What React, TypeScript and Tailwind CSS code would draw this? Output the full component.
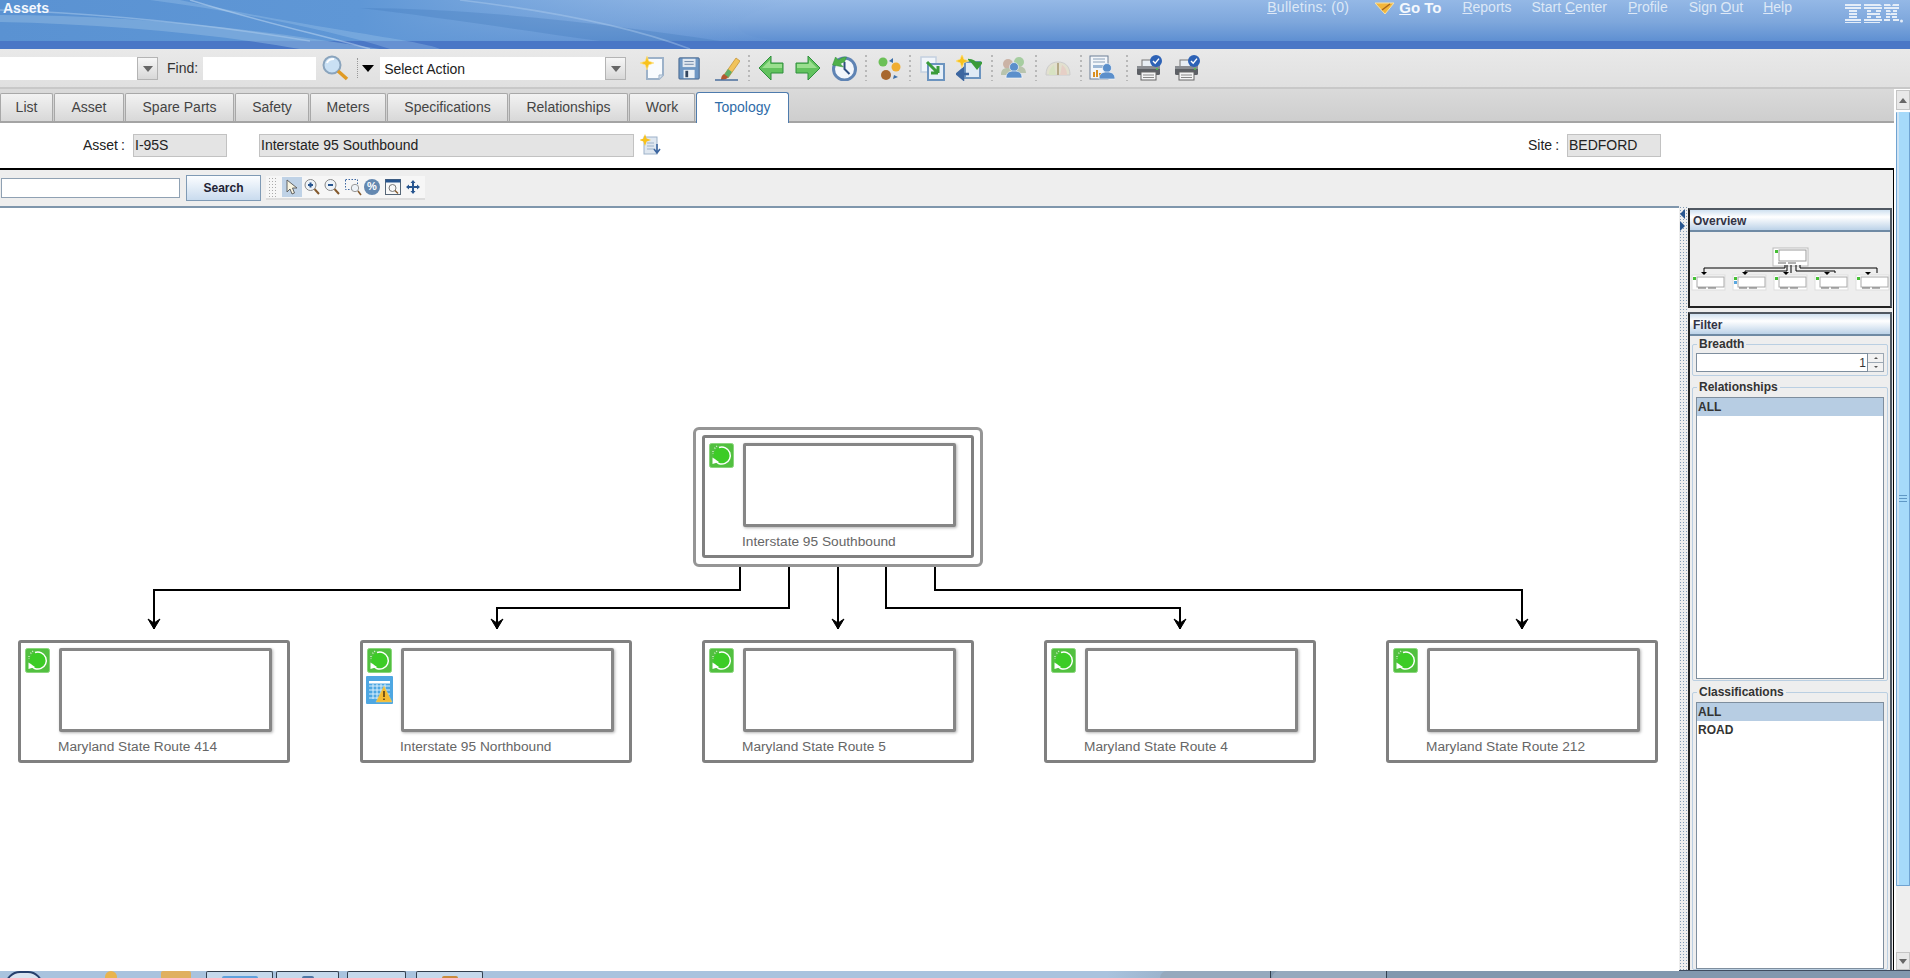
import React from "react";

const F = "font-['Liberation_Sans',Arial,sans-serif]";

function Banner() {
  return (
    <div className="relative h-[49px] shrink-0 overflow-hidden bg-[linear-gradient(#94b8e6_0%,#7ea7dc_45%,#5f90d2_83%,#4a77c6_84%,#4a77c6_100%)]">
      <svg className="absolute left-0 top-0" width="1910" height="49" viewBox="0 0 1910 49">
        <defs>
          <linearGradient id="bg1" x1="0" y1="0" x2="1" y2="0">
            <stop offset="0" stopColor="#5a92d2" />
            <stop offset="0.45" stopColor="#5f97d6" />
            <stop offset="1" stopColor="#7ea9dd" stopOpacity="0" />
          </linearGradient>
        </defs>
        <path d="M0 0H800C700 20 740 41 790 41H0Z" fill="url(#bg1)" />
        <path d="M0 15C120 15 240 26 380 49H300C210 33 100 24 0 22Z" fill="#8cb6e0" opacity="0.55" />
        <path d="M180 0C320 30 420 40 440 49H390C330 30 240 12 150 0Z" fill="#a8cdee" opacity="0.3" />
        <path d="M360 8C470 8 610 24 720 41H600C520 30 430 16 360 8Z" fill="#3f78bb" opacity="0.3" />
        <path d="M190 0C260 22 330 37 370 49" stroke="#cfe3f6" strokeWidth="1.5" fill="none" opacity="0.45" />
        <path d="M0 10C120 14 230 28 310 41" stroke="#b6d3ef" strokeWidth="1.5" fill="none" opacity="0.45" />
        <path d="M460 0C560 12 640 30 690 49" stroke="#b6d3ef" strokeWidth="1.5" fill="none" opacity="0.4" />
      </svg>
      <div className="relative flex h-[41px] items-start">
        <span className={`pl-[3px] text-[14px] font-bold leading-[16px] text-[#f4f8fd] ${F}`}>Assets</span>
        <div className={`ml-auto flex items-start text-[14px] leading-[15px] text-[#dde8f6] ${F}`}>
          <span className="tracking-[0.3px]"><u>B</u>ulletins: (0)</span>
          <svg className="ml-[26px] mt-[2px]" width="20" height="13" viewBox="0 0 20 13">
            <path d="M0 1H19L10 12Z" fill="#f2b63c" stroke="#f8e2a8" strokeWidth="1" />
            <path d="M7 8L15 2" stroke="#a8641c" strokeWidth="1.4" />
          </svg>
          <span className="ml-[4px] text-[15px] font-bold text-[#f4f8fd]"><u>G</u>o To</span>
          <span className="ml-[21px]"><u>R</u>eports</span>
          <span className="ml-[20px]">Start <u>C</u>enter</span>
          <span className="ml-[21px]"><u>P</u>rofile</span>
          <span className="ml-[21px]">Sign <u>O</u>ut</span>
          <span className="ml-[20px]"><u>H</u>elp</span>
          <svg className="ml-[53px] mr-[7px] mt-[4px]" width="58" height="19" viewBox="0 0 58 19">
            <g fill="#e4edf8">
              <path d="M0 0h16v2H0zM0 3h16v2H0zM4 6h8v2H4zM4 9h8v2H4zM4 12h8v2H4zM0 15h16v2H0zM0 18h16v1H0z" />
              <path d="M19 0h16l2 2H19zM19 3h18v2H19zM22 6h4v2h-4zM31 6h5v2h-5zM22 9h13v2H22zM22 12h4v2h-4zM31 12h5v2h-5zM19 15h18v2H19zM19 18h16v1H19z" />
              <path d="M39 0h6l1 2h-7zM48 0h6v2h-7zM39 3h8l1 2h-9zM46 3h8v2h-8zM41 6h4l1 2h-5zM48 6h4v2h-4zM41 9h4l2 2h-6zM46 9h6v2h-6zM41 12h4v2h-4zM47 12h1v2h-1zM48 12h4v2h-4zM39 15h6v2h-6zM48 15h6v2h-6z" />
              <circle cx="56.5" cy="17" r="1.5" />
            </g>
          </svg>
        </div>
      </div>
    </div>
  );
}

function Sep() {
  return <div className="mx-[1px] h-[26px] w-[2px] shrink-0 bg-[repeating-linear-gradient(#b8b8b8_0,#b8b8b8_2px,transparent_2px,transparent_5px)]" />;
}

function Dropdown({ w, children }: { w: string; children?: React.ReactNode }) {
  return (
    <div className={`mt-[1px] flex h-[23px] items-center justify-between bg-white ${w}`}>
      <span className={`pl-[4px] pt-[1px] text-[14px] text-[#222] ${F}`}>{children}</span>
      <div className="flex h-[23px] w-[21px] items-center justify-center border border-[#b4b4b4] bg-[linear-gradient(#f6f6f6,#d8d8d8)]">
        <div className="h-0 w-0 border-x-[5px] border-t-[6px] border-x-transparent border-t-[#666]" />
      </div>
    </div>
  );
}

function Ic({ w = 26, children }: { w?: number; children: React.ReactNode }) {
  return (
    <svg width={w} height="26" viewBox="0 0 26 26" className="shrink-0">
      {children}
    </svg>
  );
}

const Star = ({ x, y }: { x: number; y: number }) => (
  <path transform={`translate(${x} ${y})`} d="M0-7 1.8-1.8 7 0 1.8 1.8 0 7-1.8 1.8-7 0-1.8-1.8Z" fill="#f8c21c" stroke="#fde38a" strokeWidth="0.7" />
);

const Person = ({ x, y, c = "#5b8fcb" }: { x: number; y: number; c?: string }) => (
  <g transform={`translate(${x} ${y})`}>
    <circle cx="0" cy="-4" r="4.5" fill={c} stroke="#fff" strokeWidth="0.6" />
    <path d="M-8 7C-8 1-4 0 0 0S8 1 8 7Z" fill={c} stroke="#fff" strokeWidth="0.6" />
  </g>
);

function Printer() {
  return (
    <Ic>
      <rect x="6" y="5" width="13" height="8" fill="#e8eef4" stroke="#777" />
      <rect x="1" y="11" width="23" height="9" rx="1.5" fill="#5d6065" />
      <rect x="1" y="11" width="23" height="3" fill="#8a8d92" />
      <rect x="5" y="17" width="15" height="8" fill="#f4f4f4" stroke="#666" />
      <path d="M7 20h11M7 22.5h11" stroke="#888" />
      <circle cx="21" cy="14" r="1" fill="#4fc34a" />
      <circle cx="20" cy="6" r="6" fill="#2d62b6" />
      <path d="M17 6l2.2 2.3L23 3.6" stroke="#fff" strokeWidth="1.4" fill="none" />
    </Ic>
  );
}

function ToolbarIcons() {
  return (
    <div className="ml-[14px] flex items-center">
      <div className="flex w-[38px] shrink-0">
        <Ic>
          <path d="M7 3H23V20L19 24H7Z" fill="#f8fbfe" stroke="#9db2c9" strokeWidth="2" />
          <path d="M19 24V20H23" fill="#d7e1ec" stroke="#9db2c9" />
          <Star x={7} y={8} />
        </Ic>
      </div>
      <div className="flex w-[36px] shrink-0">
        <Ic w={24}>
          <rect x="1" y="2" width="22" height="23" rx="1" fill="#6f97c4" stroke="#44648c" />
          <rect x="5" y="3" width="14" height="9" fill="#e2e8f0" />
          <path d="M7 6h10M7 9h10" stroke="#6f86a5" />
          <rect x="6" y="15" width="12" height="9" fill="#ecf1f6" />
          <rect x="8" y="16" width="3" height="7" fill="#33465f" />
        </Ic>
      </div>
      <div className="flex w-[33px] shrink-0">
        <Ic>
          <path d="M10 20 22 3 26 6 14 23Z" fill="#f1c35c" stroke="#c08d2b" strokeWidth="0.7" />
          <path d="M10 20 14 14 18 17 14 23Z" fill="#5fae68" />
          <path d="M7 25C7 22 8 20 10 19L14 22C13 24 11 25 7 25Z" fill="#b4562f" />
          <path d="M1 25H24" stroke="#4a6e9c" strokeWidth="1.5" />
        </Ic>
      </div>
      <Sep />
      <div className="ml-[7px] flex w-[37px] shrink-0">
        <Ic>
          <path d="M1 13 13 1V8H25V18H13V25Z" fill="#62c25e" stroke="#2f8f3c" />
          <path d="M4 13 12 5V9H24V13Z" fill="#9adf8f" />
        </Ic>
      </div>
      <div className="flex w-[35px] shrink-0">
        <Ic>
          <path d="M25 13 13 1V8H1V18H13V25Z" fill="#62c25e" stroke="#2f8f3c" />
          <path d="M22 13 14 5V9H2V13Z" fill="#9adf8f" />
        </Ic>
      </div>
      <div className="flex w-[34px] shrink-0">
        <Ic w={27}>
          <circle cx="14" cy="14" r="11" fill="#f2f6fb" stroke="#5f84b4" strokeWidth="3" />
          <path d="M14 7V14L19 19" stroke="#2e4f80" strokeWidth="2" fill="none" />
          <path d="M2 10 5 2 8 5C10 3 13 2 16 2L14 7C12 7 11 8 10 9L13 12Z" fill="#4fb04a" stroke="#2f8f3c" strokeWidth="0.5" />
        </Ic>
      </div>
      <Sep />
      <div className="ml-[8px] flex w-[32px] shrink-0">
        <Ic>
          <circle cx="7" cy="7" r="4.5" fill="#6cc057" />
          <circle cx="20" cy="12" r="4.5" fill="#f0ad32" />
          <circle cx="10" cy="20" r="5" fill="#a8682f" />
          <path d="M13 6 17 3V8ZM18 20 22 22 17 24Z" fill="#3d6fa8" />
        </Ic>
      </div>
      <Sep />
      <div className="ml-[8px] flex w-[36px] shrink-0">
        <Ic>
          <rect x="1" y="2" width="15" height="15" fill="#f1f5fa" stroke="#c3d0df" strokeWidth="1.5" />
          <rect x="8" y="9" width="16" height="16" fill="#e6eff8" stroke="#6c94bf" strokeWidth="2" />
          <path d="M7 7 18 18M18 18V11M18 18H11" stroke="#3a9c3b" strokeWidth="3" fill="none" />
        </Ic>
      </div>
      <div className="flex w-[34px] shrink-0">
        <Ic>
          <rect x="9" y="7" width="15" height="16" fill="#dfeaf5" stroke="#6c94bf" strokeWidth="2" />
          <path d="M12 5C18 5 20 8 21 11M21 13 17 8H25Z" stroke="#3a9c3b" strokeWidth="2.5" fill="#3a9c3b" />
          <path d="M13 19H4M1 19 7 14V24Z" stroke="#3c66a0" strokeWidth="2.5" fill="#3c66a0" />
          <Star x={6} y={6} />
        </Ic>
      </div>
      <Sep />
      <div className="ml-[7px] flex w-[33px] shrink-0">
        <Ic>
          <circle cx="18" cy="7" r="5" fill="#a6cda0" />
          <circle cx="7" cy="9" r="5" fill="#cbb3a6" />
          <path d="M0 20C0 14 3 13 7 13S14 14 14 20ZM12 18C12 12 15 11 18 11S25 13 25 18Z" fill="#b9c4ad" />
          <Person x={13} y={16} />
        </Ic>
      </div>
      <Sep />
      <div className="ml-[7px] flex w-[34px] shrink-0">
        <Ic>
          <path d="M1 20C1 11 6 7 13 7S25 11 25 20Z" fill="#e2e0cf" stroke="#ccc" />
          <path d="M13 8V20" stroke="#b5a987" strokeWidth="2" />
          <path d="M4 20C4 15 6 12 9 10L11 20Z" fill="#d7e2c2" />
          <path d="M22 20C22 15 20 12 17 10L15 20Z" fill="#e6cfc6" />
        </Ic>
      </div>
      <Sep />
      <div className="ml-[6px] flex w-[36px] shrink-0">
        <Ic>
          <rect x="1" y="1" width="18" height="23" fill="#f3f6fa" stroke="#6c7f96" />
          <path d="M4 4h12M4 7h12" stroke="#8aa0b8" />
          <rect x="4" y="10" width="12" height="3" fill="#9db8d6" />
          <path d="M5 22v-5M8 22v-7M11 22v-4" stroke="#d98f20" strokeWidth="2" />
          <Person x={18} y={17} />
        </Ic>
      </div>
      <Sep />
      <div className="ml-[7px] flex w-[38px] shrink-0"><Printer /></div>
      <Printer />
    </div>
  );
}

function Tabs() {
  const tabs: [string, string][] = [
    ["List", "w-[53px]"],
    ["Asset", "w-[70px]"],
    ["Spare Parts", "w-[109px]"],
    ["Safety", "w-[74px]"],
    ["Meters", "w-[76px]"],
    ["Specifications", "w-[121px]"],
    ["Relationships", "w-[119px]"],
    ["Work", "w-[66px]"],
  ];
  return (
    <div className={`flex h-[34px] shrink-0 items-end border-b-2 border-[#a4a4a4] bg-[linear-gradient(#dadada,#cecece)] ${F}`}>
      {tabs.map(([t, w]) => (
        <div
          key={t}
          className={`mr-[1px] flex h-[28px] items-center justify-center rounded-t-[2px] border-x border-t border-[#a8a8a8] bg-[linear-gradient(#f2f2f2,#d8d8d8)] text-[14px] text-[#444] ${w}`}
        >
          {t}
        </div>
      ))}
      <div className="-mb-[2px] flex h-[31px] w-[93px] items-center justify-center rounded-t-[3px] border-x border-t border-[#4e7bad] bg-white pb-[1px] text-[14px] text-[#2f6ca8]">
        Topology
      </div>
    </div>
  );
}

function Field({ w, children }: { w: string; children: React.ReactNode }) {
  return (
    <div className={`flex h-[23px] items-center border border-[#c2c2c2] bg-[#e4e4e4] pl-[1px] text-[14px] text-[#222] ${w}`}>
      {children}
    </div>
  );
}

function FormRow() {
  return (
    <div className={`flex h-[45px] shrink-0 items-center bg-white pb-[1px] ${F}`}>
      <span className="ml-[83px] w-[50px] text-[14px] text-[#222]">Asset<span className="ml-[3px]">:</span></span>
      <Field w="w-[94px]">I-95S</Field>
      <div className="ml-[32px]"><Field w="w-[375px]">Interstate 95 Southbound</Field></div>
      <svg className="ml-[6px]" width="21" height="22" viewBox="0 0 21 22">
        <rect x="4" y="3" width="13" height="17" fill="#dfe7f0" stroke="#9db2c9" />
        <path d="M7 9h7M7 12h7M7 15h7" stroke="#9db2c9" />
        <path d="M17 10v8M14 15l3 4 3-4" stroke="#3c66a0" strokeWidth="1.6" fill="none" />
        <path transform="translate(5 6)" d="M0-6 1.6-1.6 6 0 1.6 1.6 0 6-1.6 1.6-6 0-1.6-1.6Z" fill="#f8c21c" />
      </svg>
      <span className="ml-[867px] w-[39px] text-[14px] text-[#222]">Site<span className="ml-[3px]">:</span></span>
      <Field w="w-[94px]">BEDFORD</Field>
    </div>
  );
}

function SearchBar() {
  return (
    <div className={`flex h-[36px] shrink-0 items-center border-r border-black bg-[#eeeeee] pl-[1px] pb-[1px] ${F}`}>
      <div className="h-[20px] w-[179px] border border-[#8fa1b3] bg-white" />
      <div className="ml-[6px] flex h-[26px] w-[75px] items-center justify-center border border-[#7f9ab5] bg-[linear-gradient(#fbfdff,#c9dbee)] text-[12px] font-bold text-[#223]">
        Search
      </div>
      <div className="ml-[5px] flex h-[24px] items-center border-b-2 border-[#dcdcdc] bg-[#f6f6f6]">
        <div className="ml-[2px] h-[20px] w-[10px] bg-[radial-gradient(#aaa_1px,transparent_1px)] bg-[length:3px_3px]" />
        <div className="ml-[4px] flex h-[20px] w-[20px] items-center justify-center bg-[#bfd2e6]">
          <svg width="14" height="16" viewBox="0 0 14 16"><path d="M2 1V13L5 10 7 15 9.5 14 7.5 9H12Z" fill="#f8f4e0" stroke="#555" strokeWidth="0.9" /></svg>
        </div>
        <svg className="ml-[2px]" width="16" height="18" viewBox="0 0 16 18">
          <circle cx="6.5" cy="7" r="5.5" fill="#eef3f8" stroke="#888" />
          <path d="M4 7h5M6.5 4.5v5" stroke="#27558f" strokeWidth="2" />
          <path d="M10.5 11 15 16" stroke="#84592c" strokeWidth="2" />
        </svg>
        <svg className="ml-[4px]" width="16" height="18" viewBox="0 0 16 18">
          <circle cx="6.5" cy="7" r="5.5" fill="#eef3f8" stroke="#888" />
          <path d="M4 7h5" stroke="#27558f" strokeWidth="2" />
          <path d="M10.5 11 15 16" stroke="#84592c" strokeWidth="2" />
        </svg>
        <svg className="ml-[5px]" width="17" height="18" viewBox="0 0 17 18">
          <rect x="0.5" y="1.5" width="12" height="10" fill="none" stroke="#3c66a0" strokeDasharray="1.5 1.5" />
          <circle cx="10" cy="10" r="3.7" fill="#eef3f8" stroke="#999" />
          <path d="M13 13 16 17" stroke="#84592c" strokeWidth="1.6" />
        </svg>
        <div className="ml-[2px] flex h-[16px] w-[16px] items-center justify-center rounded-full bg-[#6488b0] text-[11px] font-bold text-white">%</div>
        <svg className="ml-[5px]" width="16" height="16" viewBox="0 0 16 16">
          <rect x="0.5" y="0.5" width="15" height="15" fill="#f8f8f8" stroke="#567" />
          <rect x="0.5" y="0.5" width="15" height="3" fill="#27558f" />
          <circle cx="7.5" cy="9" r="3.5" fill="none" stroke="#777" />
          <path d="M10 11.5 13 14.5" stroke="#84592c" strokeWidth="1.4" />
        </svg>
        <svg className="ml-[5px] mr-[5px]" width="14" height="14" viewBox="0 0 14 14">
          <path d="M7 0 9.5 3H8V6H11V4.5L14 7 11 9.5V8H8V11H9.5L7 14 4.5 11H6V8H3V9.5L0 7 3 4.5V6H6V3H4.5Z" fill="#27558f" />
        </svg>
      </div>
    </div>
  );
}

function Badge() {
  return (
    <svg width="25" height="25" viewBox="0 0 25 25" className="shrink-0">
      <rect x="0.5" y="0.5" width="24" height="24" rx="2" fill="#52c040" stroke="#8ad67c" />
      <circle cx="13" cy="12.5" r="8.5" fill="#3ccc26" />
      <path d="M10 4.5A8.5 8.5 0 1 1 5 16" stroke="#fff" strokeWidth="1.5" fill="none" />
      <path d="M8 3 5 6M4 8v3" stroke="#d8f5d0" strokeWidth="1.3" strokeDasharray="1 1.5" />
      <path d="M3.5 21V14.5L10 19Z" fill="#fff" />
    </svg>
  );
}

function CalBadge() {
  return (
    <svg width="27" height="28" viewBox="0 0 27 28" className="-ml-[1px] mt-[3px] shrink-0">
      <rect width="27" height="28" rx="1" fill="#4ea7e2" />
      <rect x="3" y="5" width="21" height="2.5" fill="#fff" />
      <path d="M3 10h21M3 14h21M3 18h21M3 22h14M7 8v15M11 8v15M15 8v15M19 8v10" stroke="#d9effc" strokeWidth="1" />
      <path d="M18 10 26 26H10Z" fill="#f5bc32" stroke="#e5d27c" strokeWidth="0.5" />
      <path d="M18 15v6M18 22.5v1.5" stroke="#5a3e10" strokeWidth="1.6" />
    </svg>
  );
}

function DiagramNode({ label, pos, cal }: { label: string; pos: string; cal?: boolean }) {
  return (
    <div className={`absolute flex h-[123px] w-[272px] rounded-[3px] border-[3px] border-[#808080] bg-white pl-[4px] pt-[5px] ${pos}`}>
      <div className="flex w-[25px] shrink-0 flex-col">
        <Badge />
        {cal && <CalBadge />}
      </div>
      <div className="ml-[8px] flex flex-col">
        <div className="ml-[1px] h-[84px] w-[213px] rounded-[2px] border-[3px] border-[#868686] bg-white shadow-[1px_1px_3px_rgba(0,0,0,0.3)]" />
        <div className={`mt-[6px] whitespace-nowrap text-[13.7px] leading-[18px] text-[#666] ${F}`}>{label}</div>
      </div>
    </div>
  );
}

function Edges() {
  const lines = [
    "M740 358V382H154V421",
    "M789 358V400H497V421",
    "M838 358V421",
    "M886 358V400H1180V421",
    "M935 358V382H1522V421",
  ];
  const tips = [154, 497, 838, 1180, 1522];
  return (
    <svg className="absolute left-0 top-0" width="1680" height="440" viewBox="0 0 1680 440">
      {lines.map((d) => (
        <path key={d} d={d} stroke="#000" strokeWidth="2" fill="none" />
      ))}
      {tips.map((x) => (
        <path key={x} d={`M${x - 6} 411L${x} 421L${x + 6} 411L${x} 415Z`} fill="#000" stroke="#000" strokeWidth="1" />
      ))}
    </svg>
  );
}

function Canvas() {
  return (
    <div className="relative h-[763px] w-[1679px] bg-white">
      <Edges />
      <div className="absolute left-[693px] top-[219px] h-[140px] w-[290px] rounded-[6px] border-[3px] border-[#959595] bg-white">
        <div className="relative left-[6px] top-[5px]">
          <DiagramNode label="Interstate 95 Southbound" pos="left-0 top-0" />
        </div>
      </div>
      <DiagramNode label="Maryland State Route 414" pos="left-[18px] top-[432px]" />
      <DiagramNode label="Interstate 95 Northbound" pos="left-[360px] top-[432px]" cal />
      <DiagramNode label="Maryland State Route 5" pos="left-[702px] top-[432px]" />
      <DiagramNode label="Maryland State Route 4" pos="left-[1044px] top-[432px]" />
      <DiagramNode label="Maryland State Route 212" pos="left-[1386px] top-[432px]" />
    </div>
  );
}

function PanelHead({ children }: { children: React.ReactNode }) {
  return (
    <div className={`flex h-[22px] shrink-0 items-center border-b-2 border-[#6f8aa4] bg-[linear-gradient(#cfe0f0,#ffffff_35%,#bcd2e8)] pl-[3px] pt-[1px] text-[12px] font-bold text-[#334] ${F}`}>
      {children}
    </div>
  );
}

function Overview() {
  const kids = [0, 41, 82, 123, 164];
  return (
    <div className="flex h-[100px] shrink-0 flex-col border-2 border-[#505862] border-b-[#222] border-l-[#222] bg-[#eeeeee]">
      <PanelHead>Overview</PanelHead>
      <svg width="200" height="74" viewBox="0 0 200 74">
        <rect x="83" y="16" width="35" height="18" fill="#fff" stroke="#bbb" />
        <rect x="89" y="18" width="27" height="11" fill="#fff" stroke="#999" />
        <rect x="85" y="18" width="3" height="3" fill="#45c035" />
        <path d="M88 31h8M98 31h8" stroke="#666" />
        <path d="M14 41V36H95V33M55 41V39H97V33M101 33V41M106 33V39H145V41M110 33V36H187V41" stroke="#000" fill="none" />
        {kids.map((x, i) => (
          <g key={x}>
            <rect x={2 + x} y="43" width="33" height="15" fill="#fff" stroke="#ddd" />
            <rect x={7 + x} y="45" width="27" height="10" fill="#fff" stroke="#aaa" />
            <rect x={3 + x} y="45" width="3" height="3" fill="#45c035" />
            {i === 1 && <rect x={3 + x} y="49" width="3" height="3" fill="#5aa8e0" />}
            <path d={`M8 ${56}h8M18 ${56}h8`} transform={`translate(${x} 0)`} stroke="#666" />
            <path d={`M${14 + x} 43l-3-3h6Z`} fill="#000" />
          </g>
        ))}
      </svg>
    </div>
  );
}

function Fieldset({ title, cls, children }: { title: string; cls: string; children: React.ReactNode }) {
  return (
    <div className={`relative mx-[2px] rounded-[2px] border border-[#bacfe2] px-[3px] ${cls}`}>
      <span className={`absolute -top-[9px] left-[4px] bg-[#eeeeee] px-[2px] text-[12px] font-bold leading-[16px] text-[#333] ${F}`}>{title}</span>
      {children}
    </div>
  );
}

function ListBox({ items, cls }: { items: string[]; cls: string }) {
  return (
    <div className={`border border-[#7e8e9e] bg-white text-[12px] font-bold text-[#333] ${F} ${cls}`}>
      {items.map((t, i) => (
        <div key={t} className={`h-[18px] pl-[1px] leading-[18px] ${i === 0 ? "bg-[#b7cde3]" : ""}`}>
          {t}
        </div>
      ))}
    </div>
  );
}

function Filter() {
  return (
    <div className="mt-[4px] flex flex-1 flex-col border-2 border-b-0 border-[#505862] border-l-[#222] bg-[#eeeeee]">
      <PanelHead>Filter</PanelHead>
      <Fieldset title="Breadth" cls="mt-[8px] h-[32px] pt-[8px]">
        <div className="flex h-[19px]">
          <div className={`flex flex-1 items-center justify-end border border-[#7e8e9e] bg-white pr-[1px] text-[12px] text-[#333] ${F}`}>1</div>
          <div className="flex w-[16px] flex-col border-y border-r border-[#9ca8b4] bg-[#f2f2f2]">
            <div className="flex flex-1 items-center justify-center border-b border-[#9ca8b4]">
              <div className="h-0 w-0 border-x-[2px] border-b-[2px] border-x-transparent border-b-[#555]" />
            </div>
            <div className="flex flex-1 items-center justify-center">
              <div className="h-0 w-0 border-x-[2px] border-t-[2px] border-x-transparent border-t-[#555]" />
            </div>
          </div>
        </div>
      </Fieldset>
      <Fieldset title="Relationships" cls="mt-[11px] h-[294px] pt-[9px]">
        <ListBox items={["ALL"]} cls="h-[282px]" />
      </Fieldset>
      <Fieldset title="Classifications" cls="mt-[11px] flex-1 pt-[9px]">
        <ListBox items={["ALL", "ROAD"]} cls="h-full" />
      </Fieldset>
    </div>
  );
}

function Scrollbar() {
  return (
    <div className="flex w-[16px] shrink-0 flex-col pl-[2px] pt-[1px]">
      <div className="flex h-[20px] shrink-0 items-center justify-center border border-[#c4c4c4] bg-[#e8e8e8]">
        <div className="h-0 w-0 border-x-[4px] border-b-[5px] border-x-transparent border-b-[#666]" />
      </div>
      <div className="mt-[2px] flex h-[774px] shrink-0 items-center justify-center rounded-[1px] border-x border-b border-[#6fa3d2] bg-[linear-gradient(90deg,#cfe4f4_0,#cfe4f4_2px,#a6dafa_2px)]">
        <div className="h-[8px] w-[8px] bg-[repeating-linear-gradient(#5f98c6_0,#5f98c6_1px,transparent_1px,transparent_3px)]" />
      </div>
      <div className="flex-1 bg-[#eeeeee]" />
      <div className="flex h-[18px] shrink-0 items-center justify-center border border-[#c4c4c4] bg-[#e8e8e8]">
        <div className="h-0 w-0 border-x-[4px] border-t-[5px] border-x-transparent border-t-[#666]" />
      </div>
    </div>
  );
}

function Taskbar() {
  const btns = [
    ["ml-[15px] w-[67px]", "w-[36px] bg-[#5fa0dc]"],
    ["ml-[3px] w-[63px]", "w-[12px] bg-[#4f76a4]"],
    ["ml-[8px] w-[59px]", ""],
    ["ml-[10px] w-[67px]", "w-[16px] bg-[#c98a3c]"],
  ];
  return (
    <div className="flex h-[8px] shrink-0 overflow-hidden border-t border-[#3f4c5f] bg-[linear-gradient(90deg,#a9c3de_0%,#a9c3de_58%,#8298ae_66%,#8298ae_100%)]">
      <div className="ml-[5px] h-[30px] w-[38px] shrink-0 rounded-full border-2 border-[#26406c] bg-[#d8e4f0]" />
      <div className="ml-[62px] h-[10px] w-[12px] shrink-0 rounded-t-full bg-[#e8b44e]" />
      <div className="ml-[44px] h-[10px] w-[30px] shrink-0 rounded-t-[2px] bg-[#e0b060]" />
      {btns.map(([c, inner], i) => (
        <div key={i} className={`flex shrink-0 justify-center rounded-t-[2px] border-x border-t border-[#33404f] bg-[#c6d9ec] ${c}`}>
          {inner && <div className={`mt-[4px] h-[10px] rounded-t-[2px] ${inner}`} />}
        </div>
      ))}
      <div className="ml-[677px] w-[111px] shrink-0 rounded-tl-[8px] border-r border-[#33404f] bg-[#96a9bd]" />
      <div className="ml-[1px] w-[115px] shrink-0 rounded-tl-[8px] border-r border-[#33404f] bg-[#96a9bd]" />
    </div>
  );
}

function Splitter() {
  return (
    <div className="flex w-[9px] shrink-0 flex-col bg-[#eeeeee] bg-[radial-gradient(#7f9ab5_0.7px,transparent_0.7px)] bg-[length:3px_3px] pl-[1px] pt-[3px]">
      <div className="h-0 w-0 border-y-[5px] border-r-[5px] border-y-transparent border-r-[#27558f]" />
      <div className="mt-[2px] h-0 w-0 border-y-[5px] border-l-[5px] border-y-transparent border-l-[#27558f]" />
    </div>
  );
}

export default function App() {
  return (
    <div className="flex h-[978px] w-[1910px] flex-col overflow-hidden bg-white">
      <Banner />
      <div className={`flex h-[40px] shrink-0 items-center border-b-2 border-[#c8c8c8] bg-[linear-gradient(#e9e9e9,#e0e0e0)] ${F}`}>
        <Dropdown w="w-[158px]" />
        <span className="ml-[9px] pt-[1px] text-[14px] text-[#333]">Find:</span>
        <div className="ml-[5px] mt-[1px] h-[23px] w-[113px] bg-white" />
        <svg className="ml-[6px]" width="27" height="26" viewBox="0 0 27 26">
          <circle cx="10" cy="10" r="8.5" fill="#c9e0f4" stroke="#8aa4bd" strokeWidth="2" />
          <path d="M5 8C6 5 9 4 12 4" stroke="#fff" strokeWidth="2" fill="none" />
          <path d="M16 16 25 24" stroke="#e09a24" strokeWidth="3.5" />
        </svg>
        <div className="ml-[8px] h-[20px] w-[1px] border-l border-dotted border-[#999]" />
        <div className="ml-[4px] h-0 w-0 border-x-[6px] border-t-[7px] border-x-transparent border-t-black" />
        <div className="ml-[6px]"><Dropdown w="w-[246px]">Select Action</Dropdown></div>
        <ToolbarIcons />
      </div>
      <div className="flex min-h-0 flex-1">
        <div className="flex min-w-0 flex-1 flex-col">
          <Tabs />
          <FormRow />
          <div className="flex min-h-0 flex-1 flex-col border-t-2 border-black">
            <SearchBar />
            <div className="flex min-h-0 flex-1 border-r border-black bg-[#eeeeee]">
              <div className="border-t-2 border-[#7f96ac]"><Canvas /></div>
              <Splitter />
              <div className="flex flex-1 flex-col pr-[1px] pt-[2px]">
                <Overview />
                <Filter />
              </div>
            </div>
          </div>
        </div>
        <Scrollbar />
      </div>
      <Taskbar />
    </div>
  );
}
